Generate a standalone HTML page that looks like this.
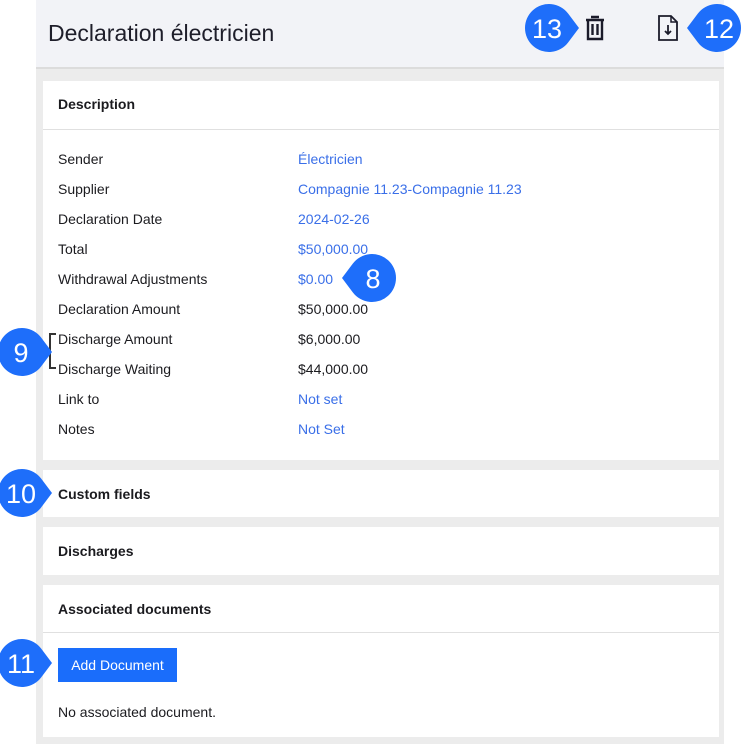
<!DOCTYPE html>
<html><head><meta charset="utf-8"><style>
*{margin:0;padding:0;box-sizing:border-box}
body{width:741px;height:744px;background:#fff;font-family:"Liberation Sans",Arial,sans-serif;position:relative;overflow:hidden;color:#1b1b1f}
.abs{position:absolute}
#panel{left:36px;top:0;width:688px;height:744px;background:#ececec}
#head{left:36px;top:0;width:688px;height:69px;background:#f2f3f7;border-bottom:2px solid #dcdcdc}
.card{position:absolute;left:43px;width:676px;background:#fff}
.ch{font-weight:bold;font-size:14px;position:absolute;left:15px}
.row{position:absolute;left:58px;font-size:14px;line-height:16px}
.val{position:absolute;left:298px;font-size:14px;line-height:16px}
.blue{color:#3a6fe8}
svg.c{position:absolute;overflow:visible}
</style></head><body>
<div id="panel" class="abs"></div>
<div id="head" class="abs"></div>
<div class="abs" style="left:48px;top:20px;font-size:23px;color:#1e1e2a">Declaration électricien</div>
<svg class="abs" style="left:584px;top:15px" width="22" height="26" viewBox="0 0 22 26"><path d="M7 2h8M2 5h18M4 5v19h14V5M8.5 9v11M13.5 9v11" stroke="#1b1b2a" stroke-width="2.4" fill="none"/></svg>
<svg class="abs" style="left:657px;top:15px" width="22" height="26" viewBox="0 0 22 26"><path d="M2 1h12l6 6v18H2z" stroke="#1b1b2a" stroke-width="1.8" fill="none"/><path d="M14 1v6h6" stroke="#1b1b2a" stroke-width="1.5" fill="none"/><path d="M11 10v9M8 16l3 3 3-3" stroke="#1b1b2a" stroke-width="1.8" fill="none"/></svg>

<div class="card" style="top:81px;height:379px">
<div class="ch" style="top:15px">Description</div>
<div style="position:absolute;left:0;top:48px;width:676px;height:1px;background:#e0e0e0"></div>
</div>
<div class="row" style="top:151px">Sender</div><div class="val blue" style="top:151px">Électricien</div>
<div class="row" style="top:181px">Supplier</div><div class="val blue" style="top:181px">Compagnie 11.23-Compagnie 11.23</div>
<div class="row" style="top:211px">Declaration Date</div><div class="val blue" style="top:211px">2024-02-26</div>
<div class="row" style="top:241px">Total</div><div class="val blue" style="top:241px">$50,000.00</div>
<div class="row" style="top:271px">Withdrawal Adjustments</div><div class="val blue" style="top:271px">$0.00</div>
<div class="row" style="top:301px">Declaration Amount</div><div class="val" style="top:301px">$50,000.00</div>
<div class="row" style="top:331px">Discharge Amount</div><div class="val" style="top:331px">$6,000.00</div>
<div class="row" style="top:361px">Discharge Waiting</div><div class="val" style="top:361px">$44,000.00</div>
<div class="row" style="top:391px">Link to</div><div class="val blue" style="top:391px">Not set</div>
<div class="row" style="top:421px">Notes</div><div class="val blue" style="top:421px">Not Set</div>
<div class="abs" style="left:49px;top:333px;width:7px;height:36px;border:2px solid #333;border-right:none"></div>

<div class="card" style="top:470px;height:47px"><div class="ch" style="top:16px">Custom fields</div></div>
<div class="card" style="top:527px;height:48px"><div class="ch" style="top:16px">Discharges</div></div>
<div class="card" style="top:585px;height:152px">
<div class="ch" style="top:16px">Associated documents</div>
<div style="position:absolute;left:0;top:47px;width:676px;height:1px;background:#e0e0e0"></div>
<div style="position:absolute;left:15px;top:63px;width:119px;height:34px;background:#1a6dfb;color:#fff;font-size:14px;line-height:34px;text-align:center">Add Document</div>
<div style="position:absolute;left:15px;top:119px;font-size:14px">No associated document.</div>
</div>

<svg class="c" style="left:0;top:0" width="741" height="744">
<defs>
<path id="L" d="M-30 0L-19.2-14.4A24 24 0 1 1-19.2 14.4Z" fill="#1e6efa"/>
<path id="R" d="M30 0L19.2-14.4A24 24 0 1 0 19.2 14.4Z" fill="#1e6efa"/>
</defs>
<g font-family="Liberation Sans,Arial,sans-serif" font-size="27" fill="#fff" text-anchor="middle">
<use href="#R" x="549" y="28"/><text x="547" y="38">13</text>
<use href="#L" x="717" y="28"/><text x="719" y="38">12</text>
<use href="#L" x="372" y="278"/><text x="373" y="288">8</text>
<use href="#R" x="22" y="352"/><text x="21" y="362">9</text>
<use href="#R" x="22" y="493"/><text x="21" y="503">10</text>
<use href="#R" x="22" y="663"/><text x="21" y="673">11</text>
</g>
</svg>
</body></html>
